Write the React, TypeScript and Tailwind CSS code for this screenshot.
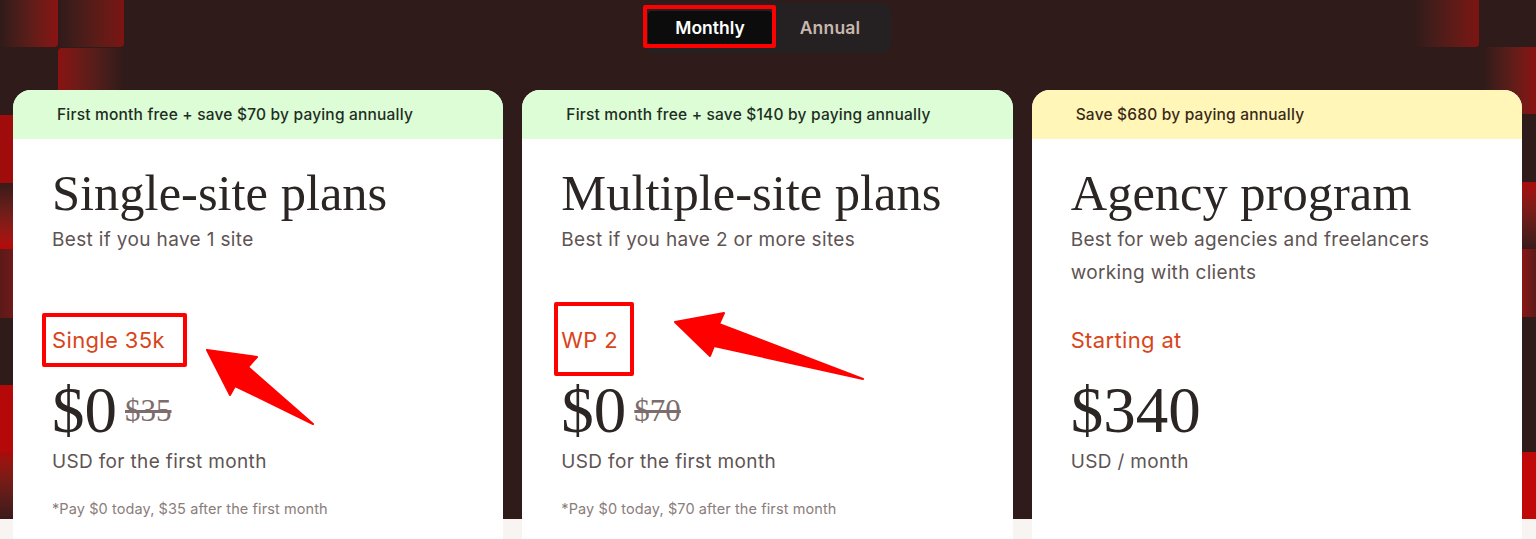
const plans = [
  {
    banner: "First month free + save $70 by paying annually",
    bannerClass: "bg-[#dcfdd6] text-[#1f2d24]",
    title: "Single-site plans",
    description: ["Best if you have 1 site"],
    label: "Single 35k",
    price: "$0",
    oldPrice: "$35",
    unit: "USD for the first month",
    note: "*Pay $0 today, $35 after the first month",
  },
  {
    banner: "First month free + save $140 by paying annually",
    bannerClass: "bg-[#dcfdd6] text-[#1f2d24]",
    title: "Multiple-site plans",
    description: ["Best if you have 2 or more sites"],
    label: "WP 2",
    price: "$0",
    oldPrice: "$70",
    unit: "USD for the first month",
    note: "*Pay $0 today, $70 after the first month",
  },
  {
    banner: "Save $680 by paying annually",
    bannerClass: "bg-[#fff6b8] text-[#3a2a17]",
    title: "Agency program",
    description: ["Best for web agencies and freelancers", "working with clients"],
    label: "Starting at",
    price: "$340",
    unit: "USD / month",
  },
];

type Plan = (typeof plans)[number];

const sans = "font-['Inter','Liberation_Sans',sans-serif]";
const serif = "font-['Liberation_Serif',serif]";

const PlanCard = ({ plan }: { plan: Plan }) => {
  return (
    <div className="h-[480px] overflow-hidden rounded-t-[18px] bg-white">
      <div className={`flex h-[49px] items-center pt-px pl-[44px] text-[15.5px] font-medium tracking-[0.2px] ${plan.bannerClass}`}>
        {plan.banner}
      </div>
      <div className="pl-[39px]">
        <h3 className={`${serif} mt-[25px] h-[59px] text-[50.5px] leading-[59px] font-normal text-[#2b2523]`}>
          {plan.title}
        </h3>
        <div className="h-[101px] text-[19px] leading-[33px] tracking-[0.35px] text-[#5e5453]">
          {plan.description.map((line) => (
            <p key={line}>{line}</p>
          ))}
        </div>
        <p className="h-[32px] text-[22px] leading-[32px] tracking-[0.35px] text-[#d9441a]">{plan.label}</p>
        <div className="mt-[23px] flex h-[62px] items-center gap-[8px]">
          <span className={`${serif} text-[65px] leading-[62px] text-[#2b2523]`}>{plan.price}</span>
          {plan.oldPrice && (
            <span className={`${serif} mt-[2px] text-[31px] leading-[28px] text-[#7c6d6c] line-through`}>
              {plan.oldPrice}
            </span>
          )}
        </div>
        <p className="mt-[4px] h-[33px] text-[19px] leading-[33px] tracking-[0.35px] text-[#5e5453]">{plan.unit}</p>
        {plan.note && <p className="mt-[21px] text-[14.5px] leading-[20px] tracking-[0.1px] text-[#8a7d7b]">{plan.note}</p>}
      </div>
    </div>
  );
};

// decorative red squares behind the cards, two small tile grids pushed to the page edges
const Backdrop = () => {
  return (
    <div className="absolute inset-x-0 top-0 flex h-[519px] justify-between overflow-hidden bg-[#2f1b1a]">
      <div className="grid grid-cols-[58px_66px] grid-rows-[48px_67px_68px_66px_69px_67px_67px_67px]">
        <div className="col-start-1 row-start-1 mb-px rounded-br-[4px] bg-gradient-to-r from-[#2f1b1a] to-[#8a1212]" />
        <div className="col-start-2 row-start-1 mb-px rounded-br-[4px] bg-gradient-to-r from-[#2f1b1a] to-[#7c1412]" />
        <div className="col-start-2 row-start-2 rounded-tl-[4px] bg-gradient-to-r from-[#8a1212] to-[#2f1b1a]" />
        <div className="col-start-1 row-start-3 w-[14px] bg-[#a00b0b]" />
        <div className="col-start-1 row-start-4 w-[14px] bg-gradient-to-b from-[#3a1a19] to-[#b70808]" />
        <div className="col-start-1 row-start-5 w-[14px] bg-gradient-to-r from-[#5a1a19] to-[#701a18]" />
        <div className="col-start-1 row-start-7 w-[14px] bg-[#b50808]" />
        <div className="col-start-1 row-start-8 w-[14px] bg-gradient-to-b from-[#a80a0a] to-[#3a1a19]" />
      </div>
      <div className="grid grid-cols-[69px_53px] grid-rows-[47px_67px_68px_67px_68px_67px_68px_67px]">
        <div className="col-start-1 row-start-1 mr-[4px] rounded-br-[4px] bg-gradient-to-r from-[#2f1b1a] to-[#7c1412]" />
        <div className="col-start-2 row-start-2 bg-gradient-to-r from-[#2f1b1a] to-[#8a1212]" />
        <div className="col-start-2 row-start-4 w-[14px] justify-self-end bg-gradient-to-b from-[#aa0c0c] to-[#3a1a19]" />
        <div className="col-start-2 row-start-5 w-[14px] justify-self-end bg-gradient-to-r from-[#8a1414] to-[#5a1a19]" />
        <div className="col-start-2 row-start-8 w-[14px] justify-self-end bg-[#c00808]" />
      </div>
    </div>
  );
};

// red markup drawn on top of the screenshot
const Annotations = () => {
  return (
    <>
      <div className="absolute top-[5px] left-[643px] h-[43px] w-[133px] rounded-[2px] border-[4px] border-[#ff0000]" />
      <div className="absolute top-[313px] left-[42px] h-[54px] w-[145px] rounded-[2px] border-[4px] border-[#ff0000]" />
      <div className="absolute top-[302px] left-[554px] h-[74px] w-[80px] rounded-[2px] border-[4px] border-[#ff0000]" />
      <svg className="absolute top-0 left-0" width="1536" height="539" fill="#ff0000" stroke="#ff0000" strokeWidth="2" strokeLinejoin="round">
        <polygon points="207,350 257,357 248,367 313,424 235,386 230,395" />
        <polygon points="675,322 724,313 719,324 863,379 714,346 710,356" />
      </svg>
    </>
  );
};

const App = () => {
  return (
    <div className={`${sans} relative h-[539px] w-full overflow-hidden bg-[#f8f4f1]`}>
      <Backdrop />
      <div className="relative pt-[3px]">
        <div className="mx-auto flex h-[50px] w-[246px] items-center rounded-[10px] bg-[#252021] pl-[3px]">
          <div className="flex h-[34px] w-[124px] items-center justify-center rounded-[4px] bg-[#0c0c0c] pt-px text-[17.5px] font-semibold text-white">
            Monthly
          </div>
          <div className="flex h-[34px] w-[116px] items-center justify-center pt-px text-[17.5px] font-semibold tracking-[0.2px] text-[#c8b8ae]">
            Annual
          </div>
        </div>
        <div className="mt-[37px] grid grid-cols-3 gap-[19px] pr-[14px] pl-[13px]">
          {plans.map((plan) => (
            <PlanCard key={plan.title} plan={plan} />
          ))}
        </div>
      </div>
      <Annotations />
    </div>
  );
};

export default App;
